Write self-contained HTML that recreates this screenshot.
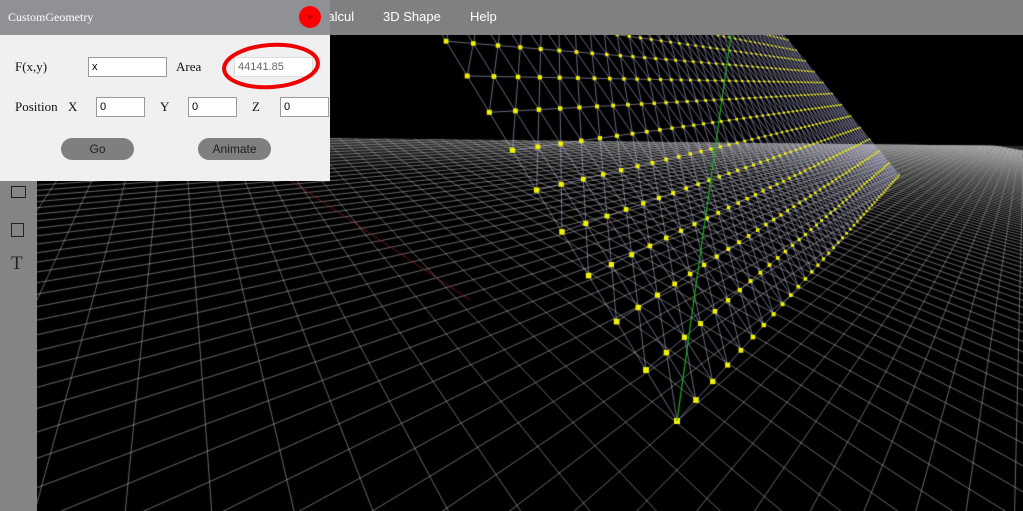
<!DOCTYPE html>
<html><head><meta charset="utf-8">
<style>
*{margin:0;padding:0;box-sizing:border-box}
body{width:1023px;height:511px;overflow:hidden;background:#000;position:relative;font-family:"Liberation Sans",sans-serif}
canvas{position:absolute;left:0;top:0}
#top{position:absolute;left:0;top:0;width:1023px;height:35px;background:#808080}
#top span{position:absolute;top:9px;color:#fff;font-size:13px}
#side{position:absolute;left:0;top:35px;width:37px;height:476px;background:#848484}
#dlg{position:absolute;left:0;top:0;width:330px;height:181px;background:#f0f0f0}
#hdr{position:absolute;left:0;top:0;width:330px;height:35px;background:#8f9194}
#hdr .t{position:absolute;left:8px;top:10px;color:#fff;font-family:"Liberation Serif",serif;font-size:12px}
#cls{position:absolute;left:299px;top:6px;width:22px;height:22px;border-radius:50%;background:#f00;color:#500;font-size:9px;text-align:center;line-height:22px}
.l{position:absolute;font-family:"Liberation Serif",serif;font-size:13px;color:#111}
.in{position:absolute;height:20px;border:1px solid #999;background:#fff;font-size:11px;padding-left:3px;line-height:18px;color:#000}
.btn{position:absolute;top:138px;width:73px;height:22px;border-radius:11px;background:#7f7f7f;color:#222;font-size:12px;text-align:center;line-height:22px}
</style></head><body>
<canvas id="c" width="1023" height="511"></canvas>
<div id="top"><span style="left:318px">Calcul</span><span style="left:383px">3D Shape</span><span style="left:470px">Help</span></div>
<div id="side">
<div style="position:absolute;left:11px;top:151px;width:15px;height:12px;border:1.5px solid #222"></div>
<div style="position:absolute;left:11px;top:188px;width:13px;height:14px;border:1.5px solid #222"></div>
<div style="position:absolute;left:11px;top:218px;font-family:'Liberation Serif',serif;font-size:19px;color:#222">T</div>
</div>
<div id="dlg">
<div id="hdr"><span class="t">CustomGeometry</span><div id="cls">×</div></div>
<span class="l" style="left:15px;top:59px">F(x,y)</span>
<div class="in" style="left:88px;top:57px;width:79px">x</div>
<span class="l" style="left:176px;top:59px">Area</span>
<div class="in" style="left:234px;top:57px;width:79px;border-color:#ddd;color:#666">44141.85</div>
<span class="l" style="left:15px;top:99px">Position</span>
<span class="l" style="left:68px;top:99px">X</span>
<div class="in" style="left:96px;top:97px;width:49px">0</div>
<span class="l" style="left:160px;top:99px">Y</span>
<div class="in" style="left:188px;top:97px;width:49px">0</div>
<span class="l" style="left:252px;top:99px">Z</span>
<div class="in" style="left:280px;top:97px;width:49px">0</div>
<div class="btn" style="left:61px">Go</div>
<div class="btn" style="left:198px">Animate</div>
<svg style="position:absolute;left:0;top:0" width="330" height="181"><ellipse cx="271" cy="66" rx="47" ry="21" fill="none" stroke="#e00" stroke-width="4" transform="rotate(-4 271 66)"/></svg>
</div>
<script>
var c=document.getElementById('c').getContext('2d');
c.fillStyle='#000';c.fillRect(0,0,1023,511);
c.save();
c.beginPath();c.moveTo(37,148);c.lineTo(330,138);c.lineTo(1023,146);c.lineTo(1023,511);c.lineTo(37,511);c.closePath();c.clip();
var g=c.createLinearGradient(0,138,0,175);g.addColorStop(0,'rgba(110,110,110,0.5)');g.addColorStop(1,'rgba(60,60,60,0)');
c.fillStyle=g;c.fillRect(0,130,1023,50);
var O=[676,422],VA=[175,0],VB=[1024,117],a=0.05,b=0.07;
function P(i,j){var d=1+i*b+j*a;return [ (O[0]+i*b*VB[0]+j*a*VA[0])/d,(O[1]+i*b*VB[1]+j*a*VA[1])/d,d];}
c.strokeStyle='rgba(190,190,190,0.7)';c.lineWidth=0.8;
var LO=-80,HI=140;
function line(f){c.beginPath();var on=false;for(var t=LO;t<=HI;t+=0.1){var p=f(t);if(p[2]>0.04){if(on)c.lineTo(p[0],p[1]);else{c.moveTo(p[0],p[1]);on=true;}}else on=false;}c.stroke();}
for(var i=LO;i<=HI;i++){(function(i){line(function(t){return P(i,t)})})(i);}
for(var j=LO;j<=HI;j++){(function(j){line(function(t){return P(t,j)})})(j);}
c.restore();
c.strokeStyle='rgba(150,40,30,0.7)';c.lineWidth=1;c.beginPath();c.moveTo(290,180);c.lineTo(470,300);c.stroke();
var A=[677,421],D1=[-13.75,-41.1,0.0267],D2=[65.4,5.7,0.0667];
function M(j,k){var d=1+j*D2[2]+k*D1[2];return [(A[0]+j*D2[0]+k*D1[0])/d,(A[1]+j*D2[1]+k*D1[1])/d,d];}
var J=41,K=16;
c.strokeStyle='rgba(200,200,245,0.75)';c.lineWidth=0.7;c.beginPath();
for(var k=0;k<=K;k++){for(var j=0;j<=J;j++){var p=M(j,k);
 if(j<J){var q=M(j+1,k);c.moveTo(p[0],p[1]);c.lineTo(q[0],q[1]);}
 if(k<K){var q=M(j,k+1);c.moveTo(p[0],p[1]);c.lineTo(q[0],q[1]);}
 if(j<J&&k<K){var q=M(j+1,k+1);c.moveTo(p[0],p[1]);c.lineTo(q[0],q[1]);}
}}
c.stroke();
c.fillStyle='#f2f200';
for(var k=0;k<=K;k++){for(var j=0;j<=J;j++){var p=M(j,k);var s=Math.max(1.6,6/p[2]);c.fillRect(p[0]-s/2,p[1]-s/2,s,s);}}
c.strokeStyle='#1db01d';c.lineWidth=1.2;c.beginPath();c.moveTo(677,421);c.lineTo(731,35);c.stroke();
</script>
</body></html>
